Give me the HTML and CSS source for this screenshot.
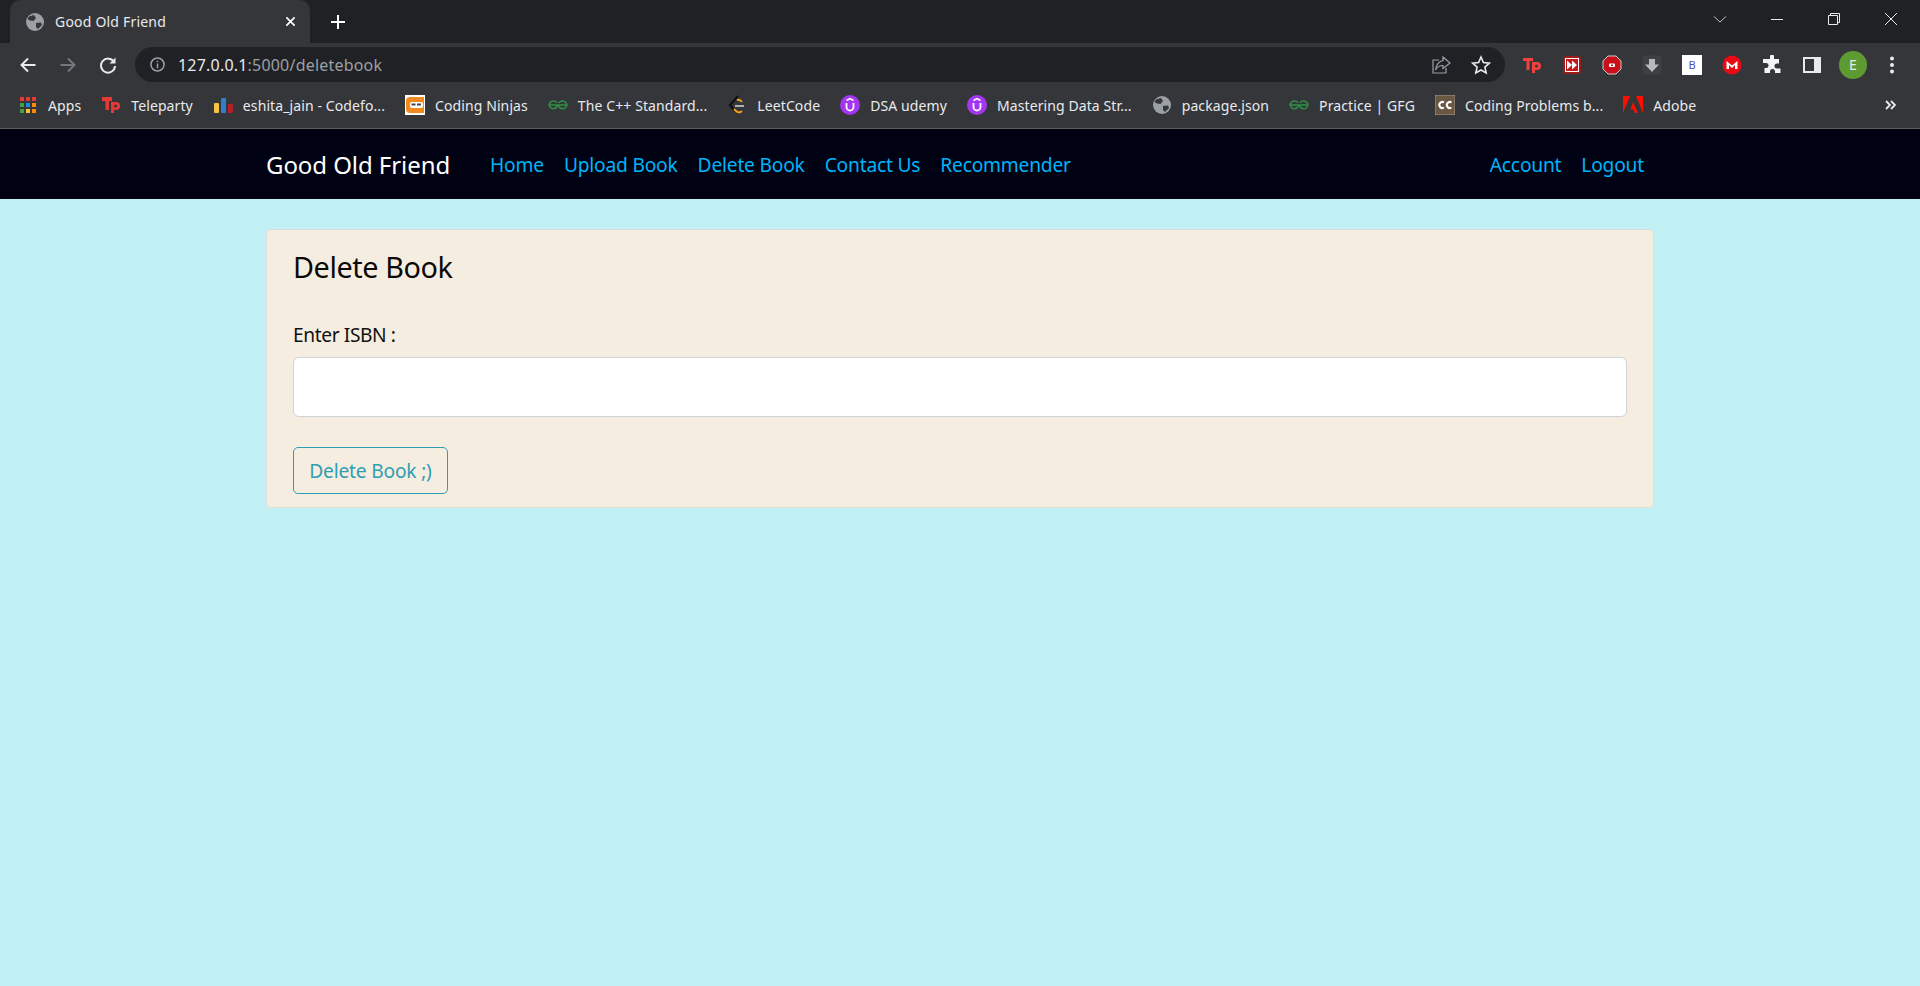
FILE: index.html
```html
<!DOCTYPE html>
<html lang="en">
<head>
    <meta charset="UTF-8">
    <meta name="viewport" content="width=device-width, initial-scale=1.0">
    <title>Good Old Friend</title>
    <link rel="stylesheet" href="styles.css">
</head>
<body>

<div class="browser">
    <!-- tab strip -->
    <div class="tabstrip">
        <div class="tab">
            <svg class="favicon" viewBox="0 0 18 18"><circle cx="9" cy="9" r="9" fill="#9aa0a6"/><path d="M3 3.5 L8 2 L10 5 L7.5 8 L4 7.5 L1.5 6 Z M10 10 L15 9.5 L16 12 L12 16 L10 14 Z" fill="#35363a"/></svg>
            <span class="tab-title">Good Old Friend</span>
            <svg class="tab-close" viewBox="0 0 12 12"><path d="M1.5 1.5 L10.5 10.5 M10.5 1.5 L1.5 10.5" stroke="#fff" stroke-width="1.8"/></svg>
        </div>
        <svg class="new-tab" viewBox="0 0 16 16"><path d="M8 1 V15 M1 8 H15" stroke="#fff" stroke-width="2"/></svg>
        <div class="window-controls">
            <svg class="win-btn" viewBox="0 0 14 14"><path d="M1 4.5 L7 10 L13 4.5" fill="none" stroke="#bdc1c6" stroke-width="1"/></svg>
            <svg class="win-btn" viewBox="0 0 14 14"><path d="M1 7.5 H13" stroke="#e8eaed" stroke-width="1"/></svg>
            <svg class="win-btn" viewBox="0 0 14 14"><path d="M1.5 3.5 H10.5 V12.5 H1.5 Z M3.5 3.5 V1.5 H12.5 V10.5 H10.5" fill="none" stroke="#e8eaed" stroke-width="1"/></svg>
            <svg class="win-btn" viewBox="0 0 14 14"><path d="M1 1 L13 13 M13 1 L1 13" stroke="#e8eaed" stroke-width="1"/></svg>
        </div>
    </div>

    <!-- toolbar -->
    <div class="toolbar">
        <svg class="tool" viewBox="0 0 18 18"><path d="M16.5 9 H2.5 M9 2.5 L2.5 9 L9 15.5" fill="none" stroke="#e8eaed" stroke-width="2"/></svg>
        <svg class="tool" viewBox="0 0 18 18"><path d="M1.5 9 H15.5 M9 2.5 L15.5 9 L9 15.5" fill="none" stroke="#74777c" stroke-width="2"/></svg>
        <svg class="tool" viewBox="0 0 18 18"><path d="M15 6 A7 7 0 1 0 16 10" fill="none" stroke="#e8eaed" stroke-width="2"/><path d="M16.5 1.5 V7.5 H10.5 Z" fill="#e8eaed"/></svg>
        <div class="omnibox">
            <svg class="site-info" viewBox="0 0 16 16"><circle cx="8" cy="8" r="7" fill="none" stroke="#9aa0a6" stroke-width="1.6"/><path d="M8 7 V12 M8 4 V5.6" stroke="#9aa0a6" stroke-width="1.6"/></svg>
            <span class="url"><span class="url-host">127.0.0.1</span>:5000/deletebook</span>
            <svg class="omni-icon" viewBox="0 0 20 20"><path d="M8 5 H2 V18 H15 V13" fill="none" stroke="#9aa0a6" stroke-width="1.2"/><path d="M12 2 L19 8 L12 13.5 V10.5 C8 10.5 6 12 4.5 15 C5 10 8 6 12 5.5 Z" fill="none" stroke="#9aa0a6" stroke-width="1.2"/></svg>
            <svg class="omni-icon" viewBox="0 0 20 20"><path d="M10 2 L12.4 7.5 L18.4 8.1 L13.9 12.1 L15.2 18 L10 15 L4.8 18 L6.1 12.1 L1.6 8.1 L7.6 7.5 Z" fill="none" stroke="#e8eaed" stroke-width="1.6"/></svg>
        </div>
        <div class="extensions">
            <span class="ext"><svg viewBox="0 0 20 20"><path d="M1 3 H11 V6 H7.5 V15 H4.5 V6 H1 Z" fill="#f04040"/><path d="M10 7 H15 A4 4 0 0 1 15 15 H13 V18 H10 Z" fill="#f04040"/><circle cx="14.5" cy="11" r="1.5" fill="#35363a"/></svg></span>
            <span class="ext"><svg viewBox="0 0 20 20"><rect x="1" y="1" width="18" height="18" rx="3" fill="#9c1c1c"/><rect x="3" y="3" width="14" height="14" fill="#fff"/><rect x="4" y="4" width="12" height="12" fill="#c8161d"/><path d="M5 5.5 L10 10 L5 14.5 Z M10 5.5 L15 10 L10 14.5 Z" fill="#fff"/></svg></span>
            <span class="ext"><svg viewBox="0 0 20 20"><path d="M6 1 H14 L19 6 V14 L14 19 H6 L1 14 V6 Z" fill="#c8101a" stroke="#ccc" stroke-width="1"/><rect x="7" y="8.5" width="6" height="3.5" rx="1" fill="#fff"/><rect x="9" y="9.5" width="2" height="1.5" fill="#c8101a"/></svg></span>
            <span class="ext"><svg viewBox="0 0 20 20"><rect x="0.5" y="0.5" width="19" height="19" rx="3" fill="#3f4043"/><path d="M7 4 H13 V9.5 H17 L10 17 L3 9.5 H7 Z" fill="#b9babb"/></svg></span>
            <span class="ext"><span class="ext-b">B</span></span>
            <span class="ext"><svg viewBox="0 0 20 20"><circle cx="10" cy="10" r="9.5" fill="#ea0a14"/><path d="M4.5 14 V6 L10 10.5 L15.5 6 V14 H13 V10 L10 13 L7 10 V14 Z" fill="#fff"/></svg></span>
            <span class="ext"><svg viewBox="0 0 20 20"><path d="M8 1.5 A2 2 0 0 1 12 1.5 V4 H17 V8.5 H15 A2.5 2.5 0 0 0 15 13.5 H18.5 V18 H13 V16.5 A2.5 2.5 0 0 0 8 16.5 V18 H2.5 V13 H4 A2.5 2.5 0 0 0 4 8 H1 V4 H8 Z" fill="#f1f3f4"/></svg></span>
            <span class="ext"><svg viewBox="0 0 20 20"><rect x="1" y="2" width="18" height="16" fill="#e8eaed"/><rect x="3" y="4" width="9" height="12" fill="#35363a"/></svg></span>
            <span class="avatar">E</span>
            <span class="ext"><svg viewBox="0 0 20 20"><circle cx="10" cy="3.5" r="2" fill="#e8eaed"/><circle cx="10" cy="10" r="2" fill="#e8eaed"/><circle cx="10" cy="16.5" r="2" fill="#e8eaed"/></svg></span>
        </div>
    </div>

    <!-- bookmarks -->
    <div class="bookmarks">
        <a class="bm"><svg viewBox="-1 -1 20 20"><rect x="1" y="1" width="4" height="4" fill="#e53935"/><rect x="7" y="1" width="4" height="4" fill="#e53935"/><rect x="13" y="1" width="4" height="4" fill="#e53935"/><rect x="1" y="7" width="4" height="4" fill="#43a047"/><rect x="7" y="7" width="4" height="4" fill="#1e88e5"/><rect x="13" y="7" width="4" height="4" fill="#fb8c00"/><rect x="1" y="13" width="4" height="4" fill="#43a047"/><rect x="7" y="13" width="4" height="4" fill="#fbc02d"/><rect x="13" y="13" width="4" height="4" fill="#fb8c00"/></svg>Apps</a>
        <a class="bm"><svg viewBox="0 0 20 20"><path d="M1 2 H11 V6 H8 V15 H4.5 V6 H1 Z" fill="#e53935"/><path d="M10 7 H15 A4 4 0 0 1 15 15 H13 V18 H10 Z" fill="#e53935"/><circle cx="14.5" cy="11" r="1.5" fill="#35363a"/></svg>Teleparty</a>
        <a class="bm"><svg viewBox="0 0 20 20"><rect x="1" y="8" width="5" height="10" rx="1" fill="#f6c343"/><rect x="8" y="3" width="5" height="15" rx="1" fill="#2f80c8"/><rect x="15" y="9" width="5" height="9" rx="1" fill="#b3202a"/></svg>eshita_jain - Codefo...</a>
        <a class="bm"><svg viewBox="0 0 20 20"><rect width="20" height="20" fill="#fff"/><path d="M1 6 A4 4 0 0 1 5 2 H19 V18 H5 A4 4 0 0 1 1 14 Z" fill="#f28a1e"/><rect x="5" y="7" width="13" height="6" rx="2" fill="#fff"/><rect x="6.5" y="8.5" width="4" height="2" fill="#444"/><rect x="12" y="8.5" width="4" height="2" fill="#444"/></svg>Coding Ninjas</a>
        <a class="bm"><svg viewBox="0 0 20 20"><path d="M10 10 H1 C2 5 8 5 9 8 M1.5 10 C2 15 8 15 9.5 10.5 M10 10 H19 C18 5 12 5 11 8 M18.5 10 C18 15 12 15 10.5 10.5" fill="none" stroke="#2f8d46" stroke-width="1.5"/></svg>The C++ Standard...</a>
        <a class="bm"><svg viewBox="0 0 20 20"><path d="M11 1 L3 10 L8 16 C10 18 13 18 15 16" fill="none" stroke="#101010" stroke-width="2"/><path d="M8 11 H17" fill="none" stroke="#b0b0b0" stroke-width="2"/><path d="M7 14 L9 16 C11 18 13 18 15 16" fill="none" stroke="#f0a020" stroke-width="2"/><path d="M10 5 C12 4.5 14 5.5 15 7" fill="none" stroke="#f0a020" stroke-width="2"/></svg>LeetCode</a>
        <a class="bm"><svg viewBox="0 0 20 20"><circle cx="10" cy="10" r="10" fill="#a435f0"/><path d="M6.5 8 V12 A3.5 3.5 0 0 0 13.5 12 V8" fill="none" stroke="#fff" stroke-width="1.8"/><path d="M6.5 5.5 L10 3.5 L13.5 5.5" fill="none" stroke="#fff" stroke-width="1.5"/></svg>DSA udemy</a>
        <a class="bm"><svg viewBox="0 0 20 20"><circle cx="10" cy="10" r="10" fill="#a435f0"/><path d="M6.5 8 V12 A3.5 3.5 0 0 0 13.5 12 V8" fill="none" stroke="#fff" stroke-width="1.8"/><path d="M6.5 5.5 L10 3.5 L13.5 5.5" fill="none" stroke="#fff" stroke-width="1.5"/></svg>Mastering Data Str...</a>
        <a class="bm"><svg viewBox="-1 -1 20 20"><circle cx="9" cy="9" r="9" fill="#9aa0a6"/><path d="M3 3.5 L8 2 L10 5 L7.5 8 L4 7.5 L1.5 6 Z M10 10 L15 9.5 L16 12 L12 16 L10 14 Z" fill="#35363a"/></svg>package.json</a>
        <a class="bm"><svg viewBox="0 0 20 20"><path d="M10 10 H1 C2 5 8 5 9 8 M1.5 10 C2 15 8 15 9.5 10.5 M10 10 H19 C18 5 12 5 11 8 M18.5 10 C18 15 12 15 10.5 10.5" fill="none" stroke="#2f8d46" stroke-width="1.5"/></svg>Practice | GFG</a>
        <a class="bm"><svg viewBox="0 0 20 20"><rect width="20" height="20" fill="#6b5644" stroke="#a89a8c"/><path d="M9 7.5 A3 3 0 1 0 9 12.5 M16.5 7.5 A3 3 0 1 0 16.5 12.5" fill="none" stroke="#fff" stroke-width="2"/></svg>Coding Problems b...</a>
        <a class="bm"><svg viewBox="0 0 20 20"><path d="M0 1 H7 L0 18 Z M13 1 H20 V18 Z M10 7 L15 18 H12 L10.5 14.5 H7.5 Z" fill="#fa0f00"/></svg>Adobe</a>
        <svg class="bm-more" viewBox="0 0 12 12"><path d="M2 2 L6 6 L2 10 M7 2 L11 6 L7 10" fill="none" stroke="#e8eaed" stroke-width="1.8"/></svg>
    </div>
</div>

<nav class="navbar">
    <div class="nav-inner">
        <a class="brand" href="#">Good Old Friend</a>
        <div class="nav-links">
            <a href="#">Home</a>
            <a href="#">Upload Book</a>
            <a href="#">Delete Book</a>
            <a href="#">Contact Us</a>
            <a href="#">Recommender</a>
        </div>
        <div class="nav-links nav-right">
            <a href="#">Account</a>
            <a href="#">Logout</a>
        </div>
    </div>
</nav>

<main class="content">
    <form class="card">
        <h3>Delete Book</h3>
        <label for="isbn">Enter ISBN :</label>
        <input type="text" id="isbn">
        <button type="button" class="btn-outline">Delete Book ;)</button>
    </form>
</main>

</body>
</html>
```

FILE: styles.css
```css
* {
    box-sizing: border-box;
}
html, body {
    height: 100%;
}
body {
    margin: 0;
    font-family: "Noto Sans", Arial, sans-serif;
    background-color: #c1f1f5;
    overflow: hidden;
}
svg {
    display: block;
}

/* browser chrome */
.browser {
    height: 129px;
    background-color: #35363a;
    border-bottom: 1px solid #5f6064;
}
.tabstrip {
    display: flex;
    align-items: center;
    height: 43px;
    padding-left: 10px;
    background-color: #202124;
}
.tab {
    display: flex;
    align-items: center;
    width: 300px;
    height: 43px;
    padding: 0 14px 0 16px;
    background-color: #35363a;
    border-radius: 10px 10px 0 0;
    color: #e8eaed;
    font-size: 14px;
}
.favicon {
    width: 18px;
    height: 18px;
    margin-right: 11px;
}
.tab-title {
    flex: 1;
    letter-spacing: 0.2px;
}
.tab-close {
    width: 11px;
    height: 11px;
}
.new-tab {
    width: 16px;
    height: 16px;
    margin-left: 20px;
}
.window-controls {
    display: flex;
    align-items: center;
    gap: 43px;
    margin-left: auto;
    margin-right: 22px;
    margin-top: -5px;
}
.win-btn {
    width: 14px;
    height: 14px;
}
.toolbar {
    display: flex;
    align-items: center;
    height: 42px;
    padding: 1px 8px 0 19px;
}
.tool {
    width: 18px;
    height: 18px;
    margin-right: 22px;
}
.omnibox {
    display: flex;
    align-items: center;
    width: 1370px;
    height: 35px;
    margin-left: -4px;
    padding: 0 14px 0 15px;
    background-color: #202124;
    border-radius: 18px;
    color: #9aa0a6;
    font-size: 16px;
}
.site-info {
    width: 15px;
    height: 15px;
    margin-right: 13px;
}
.url {
    flex: 1;
    letter-spacing: 0.2px;
}
.url-host {
    color: #e8eaed;
}
.omni-icon {
    width: 20px;
    height: 20px;
    margin-left: 20px;
}
.extensions {
    display: flex;
    align-items: center;
    margin-left: 7px;
}
.ext {
    display: flex;
    align-items: center;
    justify-content: center;
    width: 40px;
    height: 32px;
}
.ext svg {
    width: 20px;
    height: 20px;
}
.ext-b {
    width: 20px;
    height: 20px;
    background-color: #fff;
    color: #4a4ac0;
    font-size: 11px;
    line-height: 20px;
    text-align: center;
}
.avatar {
    width: 28px;
    height: 28px;
    margin: 0 5px 0 7px;
    border-radius: 50%;
    background-color: #5e9a32;
    color: #e8eaed;
    font-size: 14px;
    line-height: 28px;
    text-align: center;
}
.bookmarks {
    display: flex;
    align-items: center;
    height: 43px;
    padding-left: 8px;
    padding-bottom: 3px;
}
.bm {
    display: flex;
    align-items: center;
    gap: 10px;
    padding: 0 10px;
    color: #e8eaed;
    font-size: 14px;
    letter-spacing: 0.1px;
    white-space: nowrap;
}
.bm svg {
    width: 20px;
    height: 20px;
}
.bm-more {
    width: 12px;
    height: 12px;
    margin-left: auto;
    margin-right: 24px;
}

/* site navbar */
.navbar {
    height: 70px;
    background-color: #000214;
}
.nav-inner {
    display: flex;
    align-items: center;
    width: 1388px;
    height: 100%;
    margin: 0 auto;
}
.brand {
    margin-right: 30px;
    color: #fff;
    font-size: 24px;
    letter-spacing: -0.07px;
    text-decoration: none;
}
.nav-links {
    display: flex;
}
.nav-links a {
    padding: 0 10px;
    color: #00b4f8;
    font-size: 19.2px;
    letter-spacing: -0.2px;
    text-decoration: none;
}
.nav-right {
    margin-left: auto;
}

/* page body */
.content {
    width: 1388px;
    margin: 30px auto 0;
}
.card {
    display: flex;
    flex-direction: column;
    align-items: flex-start;
    height: 279px;
    padding: 18px 26px 0;
    background-color: #f5eee0;
    border: 1px solid #dcdcd8;
    border-radius: 4px;
}
.card h3 {
    margin: 0 0 35px;
    color: #0a0a0a;
    font-size: 28.8px;
    font-weight: 400;
    letter-spacing: -0.4px;
    line-height: 38px;
}
.card label {
    margin-bottom: 8px;
    color: #111;
    font-size: 19.2px;
    letter-spacing: -0.4px;
    line-height: 28px;
}
.card input {
    width: 100%;
    height: 60px;
    margin-bottom: 30px;
    background-color: #fff;
    border: 1px solid #ced4da;
    border-radius: 6px;
}
.btn-outline {
    width: 155px;
    height: 47px;
    padding: 0;
    background: transparent;
    border: 1px solid #2f9db5;
    border-radius: 5px;
    color: #2f9db5;
    font-family: inherit;
    font-size: 19.2px;
    letter-spacing: -0.2px;
}
```
